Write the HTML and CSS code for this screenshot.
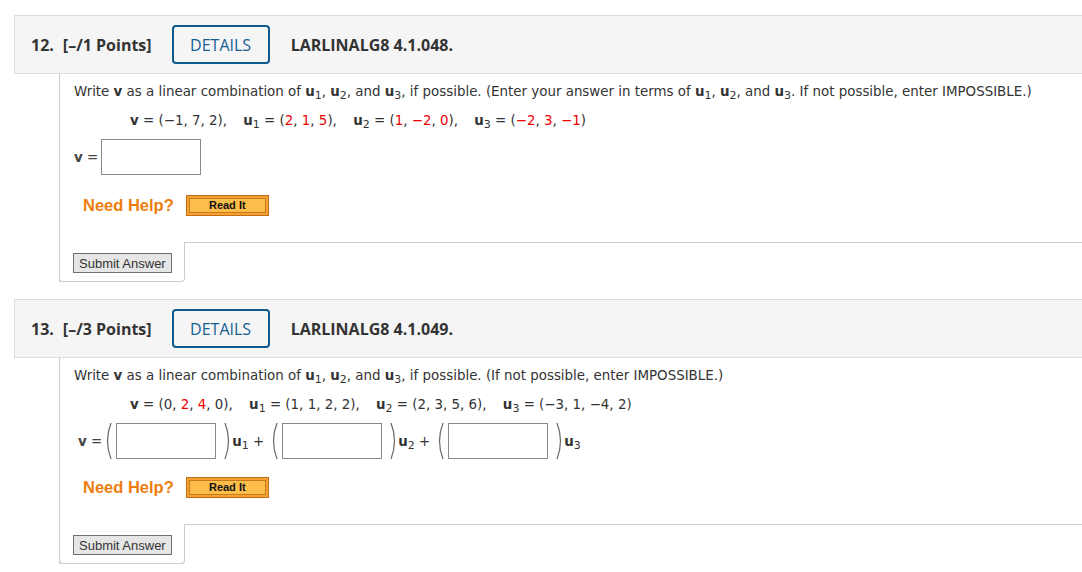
FILE: index.html
```html
<!DOCTYPE html>
<html lang="en">
<head>
    <meta charset="UTF-8">
    <title>Assignment</title>
    <link rel="stylesheet" href="styles.css">
</head>
<body>

<div class="question">
    <div class="q-header">
        <span class="q-num">12.</span>
        <span class="q-points">[–/1 Points]</span>
        <button class="details">DETAILS</button>
        <span class="q-ref">LARLINALG8 4.1.048.</span>
    </div>
    <div class="q-body">
        <p class="q-text">Write <b>v</b> as a linear combination of <b>u</b><sub>1</sub>, <b>u</b><sub>2</sub>, and <b>u</b><sub>3</sub>, if possible. (Enter your answer in terms of <b>u</b><sub>1</sub>, <b>u</b><sub>2</sub>, and <b>u</b><sub>3</sub>. If not possible, enter IMPOSSIBLE.)</p>
        <p class="q-math">
            <span class="vec"><b>v</b> = (−1, 7, 2),</span>
            <span class="vec"><b>u</b><sub>1</sub> = (<i class="rnd">2</i>, <i class="rnd">1</i>, <i class="rnd">5</i>),</span>
            <span class="vec"><b>u</b><sub>2</sub> = (<i class="rnd">1</i>, <i class="rnd">−2</i>, <i class="rnd">0</i>),</span>
            <span class="vec"><b>u</b><sub>3</sub> = (<i class="rnd">−2</i>, <i class="rnd">3</i>, <i class="rnd">−1</i>)</span>
        </p>
        <div class="answer-row">
            <span class="lbl"><b>v</b> =</span>
            <input class="ans" type="text">
        </div>
        <div class="help-row">
            <span class="need-help">Need Help?</span>
            <span class="read-it"><span>Read It</span></span>
        </div>
        <div class="q-foot">
            <div class="submit-cell"><button class="submit">Submit Answer</button></div>
            <div class="foot-fill"></div>
        </div>
    </div>
</div>

<div class="question">
    <div class="q-header">
        <span class="q-num">13.</span>
        <span class="q-points">[–/3 Points]</span>
        <button class="details">DETAILS</button>
        <span class="q-ref">LARLINALG8 4.1.049.</span>
    </div>
    <div class="q-body">
        <p class="q-text">Write <b>v</b> as a linear combination of <b>u</b><sub>1</sub>, <b>u</b><sub>2</sub>, and <b>u</b><sub>3</sub>, if possible. (If not possible, enter IMPOSSIBLE.)</p>
        <p class="q-math">
            <span class="vec"><b>v</b> = (0, <i class="rnd">2</i>, <i class="rnd">4</i>, 0),</span>
            <span class="vec"><b>u</b><sub>1</sub> = (1, 1, 2, 2),</span>
            <span class="vec"><b>u</b><sub>2</sub> = (2, 3, 5, 6),</span>
            <span class="vec"><b>u</b><sub>3</sub> = (−3, 1, −4, 2)</span>
        </p>
        <div class="answer-row combo">
            <span class="lbl"><b>v</b> =</span>
            <svg class="paren" width="8" height="38" viewBox="0 0 8 38"><path d="M7 1 Q0 19 7 37" /></svg>
            <input class="ans" type="text">
            <svg class="paren close" width="8" height="38" viewBox="0 0 8 38"><path d="M1 1 Q8 19 1 37" /></svg>
            <span class="term"><b>u</b><sub>1</sub> +</span>
            <svg class="paren" width="8" height="38" viewBox="0 0 8 38"><path d="M7 1 Q0 19 7 37" /></svg>
            <input class="ans" type="text">
            <svg class="paren close" width="8" height="38" viewBox="0 0 8 38"><path d="M1 1 Q8 19 1 37" /></svg>
            <span class="term"><b>u</b><sub>2</sub> +</span>
            <svg class="paren" width="8" height="38" viewBox="0 0 8 38"><path d="M7 1 Q0 19 7 37" /></svg>
            <input class="ans" type="text">
            <svg class="paren close" width="8" height="38" viewBox="0 0 8 38"><path d="M1 1 Q8 19 1 37" /></svg>
            <span class="term"><b>u</b><sub>3</sub></span>
        </div>
        <div class="help-row">
            <span class="need-help">Need Help?</span>
            <span class="read-it"><span>Read It</span></span>
        </div>
        <div class="q-foot">
            <div class="submit-cell"><button class="submit">Submit Answer</button></div>
            <div class="foot-fill"></div>
        </div>
    </div>
</div>

</body>
</html>
```

FILE: styles.css
```css
body {
    margin: 0;
    padding: 15px 0 0 14px;
    background: #fff;
    color: #333;
    font-family: "DejaVu Sans", Verdana, sans-serif;
    font-size: 13.4px;
    overflow: hidden;
}

.question {
    margin-bottom: 17px;
}

/* grey title bar of each question */
.q-header {
    display: flex;
    align-items: center;
    height: 57px;
    padding-left: 16px;
    background-color: #f5f5f5;
    border: 1px solid #ddd;
    border-right: none;
    font-family: "Open Sans", sans-serif;
    font-size: 16px;
    color: #333;
}
.q-num {
    font-weight: bold;
}
.q-points {
    font-weight: bold;
    margin-left: 9px;
}
.details {
    margin-left: 20px;
    width: 98px;
    height: 39px;
    background: transparent;
    border: 2px solid #0f5b8d;
    border-radius: 4px;
    color: #175e91;
    font-family: "Open Sans", sans-serif;
    font-size: 16px;
    font-weight: 500;
    padding: 0;
    cursor: pointer;
}
.q-ref {
    margin-left: 21px;
    font-weight: bold;
}

/* question content with the left rule */
.q-body {
    margin-left: 45px;
    border-left: 1px solid #ccc;
    padding-left: 14px;
}
.q-text {
    margin: 0;
    padding-top: 10px;
    line-height: 16px;
}
sub {
    font-size: 11px;
    line-height: 0;
    vertical-align: -3px;
}
.q-math {
    margin: 13px 0 0 56px;
    line-height: 16px;
}
.vec {
    margin-right: 12px;
}
.rnd {
    font-style: normal;
    color: #e00;
}

.answer-row {
    display: flex;
    align-items: center;
    margin-top: 10px;
}
.lbl {
    margin-right: 3px;
    color: #444;
}
.ans {
    width: 98px;
    height: 34px;
    margin: 0;
    padding: 0;
    border: 1px solid #888;
    background: #fff;
}
.combo {
    margin-top: 9px;
}
.combo .lbl {
    margin-left: 4px;
    margin-right: 2px;
}
.paren {
    margin: 0 4px 0 0;
}
.paren.close {
    margin: 0 0 0 8px;
}
.paren path {
    fill: none;
    stroke: #666;
    stroke-width: 1.2;
}
.term {
    margin-right: 6px;
}

.help-row {
    display: flex;
    align-items: center;
    height: 21px;
    margin: 20px 0 0 9px;
}
.combo + .help-row {
    margin-top: 17px;
}
.need-help {
    font-family: "Liberation Sans", Arial, sans-serif;
    font-size: 16.5px;
    font-weight: bold;
    color: #ec7d0d;
}
.read-it {
    margin-left: 12px;
    padding: 2px;
    background-color: #f4a032;
    border: 1px solid #c36e15;
}
.read-it span {
    display: block;
    width: 75px;
    height: 13px;
    line-height: 13px;
    text-align: center;
    background-color: #fdbd4a;
    border: 1px solid #c77a1c;
    font-family: "Liberation Sans", Arial, sans-serif;
    font-size: 11px;
    font-weight: bold;
    color: #111;
}

/* the submit tab at the bottom */
.q-foot {
    display: flex;
    margin: 26px 0 0 -15px;
}
.submit-cell {
    padding: 11px 12px 8px 13px;
    border: 1px solid #ccc;
    border-top: none;
    border-radius: 0 0 4px 4px;
}
.foot-fill {
    flex: 1;
    border-top: 1px solid #ccc;
}
.submit {
    display: block;
    margin: 0;
    padding: 0 5px;
    height: 20px;
    background-color: #e6e6e6;
    border: 1px solid #707070;
    border-radius: 0;
    font-family: "Liberation Sans", Arial, sans-serif;
    font-size: 13px;
    color: #333;
}
```
